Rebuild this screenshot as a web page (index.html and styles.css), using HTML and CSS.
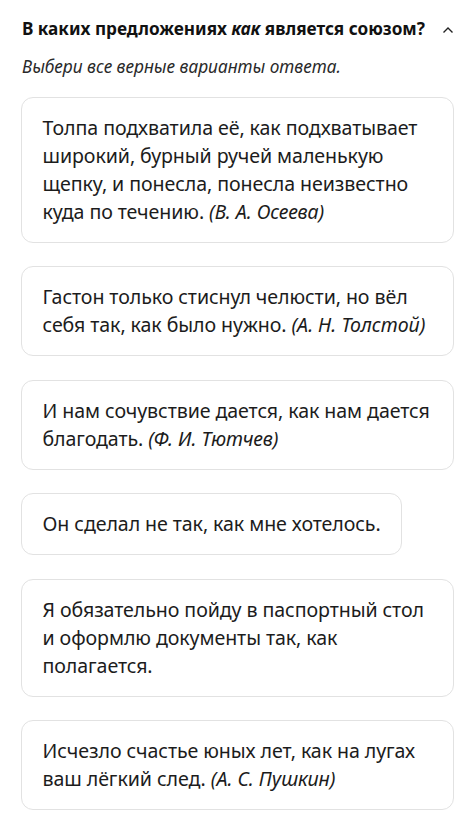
FILE: index.html
```html
<!DOCTYPE html>
<html lang="ru">
<head>
<meta charset="utf-8">
<link rel="stylesheet" href="styles.css">
</head>
<body>
<div class="page">
  <div class="header">
    <h1 class="title">В каких предложениях <i>как</i> является союзом?</h1>
    <svg class="chev" width="12" height="8" viewBox="0 0 12 8"><path d="M1.5 6.5 L6 2 L10.5 6.5" fill="none" stroke="#222" stroke-width="1.4"/></svg>
  </div>
  <p class="hint">Выбери все верные варианты ответа.</p>
  <div class="options">
    <div class="card">Толпа подхватила её, как подхватывает широкий, бурный ручей маленькую щепку, и понесла, понесла неизвестно куда по течению. <i>(В. А. Осеева)</i></div>
    <div class="card">Гастон только стиснул челюсти, но вёл себя так, как было нужно. <i>(А. Н. Толстой)</i></div>
    <div class="card">И нам сочувствие дается, как нам дается благодать. <i>(Ф. И. Тютчев)</i></div>
    <div class="card short">Он сделал не так, как мне хотелось.</div>
    <div class="card">Я обязательно пойду в паспортный стол и оформлю документы так, как полагается.</div>
    <div class="card">Исчезло счастье юных лет, как на лугах ваш лёгкий след. <i>(А. С. Пушкин)</i></div>
  </div>
</div>
</body>
</html>
```

FILE: styles.css
```css
html, body {
  margin: 0;
  padding: 0;
  background: #fff;
}
body {
  font-family: "Noto Sans", "Open Sans", sans-serif;
  color: #1a1a1a;
}
.page {
  padding: 14px 20px 0 21px;
}
.header {
  display: flex;
  align-items: center;
  justify-content: space-between;
  padding-left: 1px;
}
.title {
  margin: 0;
  font-size: 17.2px;
  font-weight: 700;
  line-height: 30px;
  color: #111;
}
.title i {
  font-style: italic;
}
.chev {
  margin-right: 0;
  margin-top: 2px;
}
.hint {
  margin: 8px 0 0 1px;
  font-size: 17.3px;
  font-style: italic;
  line-height: 30px;
  color: #2a2a2a;
}
.options {
  display: flex;
  flex-direction: column;
  align-items: flex-start;
  gap: 23.4px;
  margin-top: 15px;
}
.card {
  box-sizing: border-box;
  width: 433px;
  padding: 16px 20px 16px 20.5px;
  border: 1px solid #e2e2e2;
  border-radius: 12px;
  font-size: 19.6px;
  letter-spacing: -0.08px;
  line-height: 28px;
  color: #1c1c1c;
}
.card i {
  font-weight: 400;
}
.card.short {
  width: auto;
}
```
